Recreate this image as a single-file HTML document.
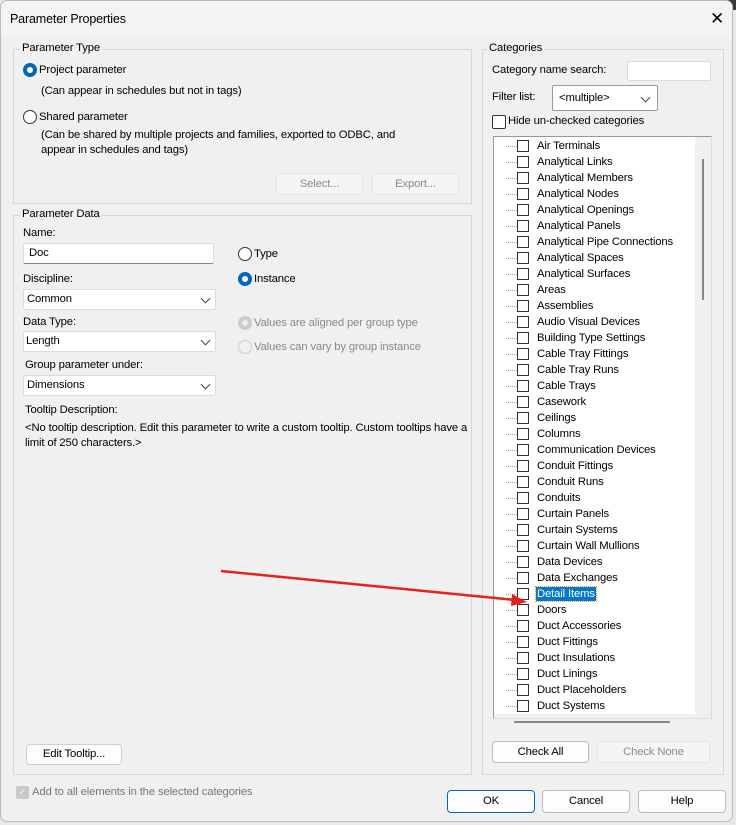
<!DOCTYPE html>
<html><head><meta charset="utf-8"><style>
*{box-sizing:border-box;margin:0;padding:0}
body{width:736px;height:825px;position:relative;overflow:hidden;background:#e8e8e8;font-family:"Liberation Sans",sans-serif;font-size:11.3px;letter-spacing:-0.15px;color:#000}
.a{position:absolute;white-space:nowrap}
.dlg{position:absolute;left:0;top:0;width:733px;height:822px;background:#f0f0f0;border:1px solid #bbb;border-radius:7px;overflow:hidden}
.grp{position:absolute;border:1px solid #d6d6d6}
.lg{position:absolute;background:#f0f0f0;padding:0 2px;top:-8px;left:6px}
.inp{position:absolute;background:#fff;border:1px solid #dcdcdc;border-bottom:1px solid #888;border-radius:2px}
.btn{position:absolute;background:#fdfdfd;border:1px solid #d0d0d0;border-radius:4px;text-align:center}
.dis{background:#f5f5f5;border-color:#e5e5e5;color:#8a8a8a}
.rad{position:absolute;width:14px;height:14px;border-radius:50%;border:1px solid #333;background:#fff}
.rad.on{background:#0067c0;border-color:#0067c0}
.rad.on::after{content:"";position:absolute;left:3px;top:3px;width:6px;height:6px;border-radius:50%;background:#fff}
.chev{position:absolute;right:6px;top:5px;width:7px;height:7px;border-right:1px solid #444;border-bottom:1px solid #444;transform:rotate(45deg)}
.it{position:absolute;left:0;height:16px}
.it .d{position:absolute;left:12px;top:8px;width:11px;border-top:1px dotted #999}
.it .c{position:absolute;left:23px;top:2px;width:12px;height:12px;border:1px solid #333;background:#fff}
.it .t{position:absolute;left:43px;top:1px;line-height:14px}
</style></head><body>
<div class="a" style="left:285px;top:0;width:600px;height:5px;background:#444"></div>
<div class="a" style="left:620px;top:0;width:120px;height:10px;background:#333a45"></div>
<div class="dlg">
<div class="a" style="left:0;top:0;width:733px;height:36px;background:#f3f3f3"></div>
<div class="a" style="left:9px;top:11px;font-size:12.5px">Parameter Properties</div>
<div class="a" style="left:709px;top:8px;font-size:17px;font-weight:300">✕</div>

<div class="grp" style="left:12px;top:48px;width:459px;height:155px"><span class="lg">Parameter Type</span></div>
<div class="rad on" style="left:22px;top:62px"></div>
<div class="a" style="left:38px;top:63px">Project parameter</div>
<div class="a" style="left:40px;top:84px">(Can appear in schedules but not in tags)</div>
<div class="rad" style="left:22px;top:109px"></div>
<div class="a" style="left:38px;top:110px">Shared parameter</div>
<div class="a" style="left:40px;top:127px;line-height:15px">(Can be shared by multiple projects and families, exported to ODBC, and<br>appear in schedules and tags)</div>
<div class="btn dis" style="left:275px;top:172px;width:87px;height:22px;line-height:20px">Select...</div>
<div class="btn dis" style="left:371px;top:172px;width:87px;height:22px;line-height:20px">Export...</div>

<div class="grp" style="left:12px;top:214px;width:459px;height:560px"><span class="lg">Parameter Data</span></div>
<div class="a" style="left:22px;top:226px">Name:</div>
<div class="inp" style="left:22px;top:242px;width:191px;height:21px"><span class="a" style="left:5px;top:3px">Doc</span></div>
<div class="a" style="left:22px;top:272px">Discipline:</div>
<div class="inp" style="left:22px;top:288px;width:193px;height:21px;border-bottom-color:#dcdcdc"><span class="a" style="left:3px;top:3px">Common</span><i class="chev"></i></div>
<div class="a" style="left:22px;top:315px">Data Type:</div>
<div class="inp" style="left:22px;top:330px;width:193px;height:21px;border-bottom-color:#dcdcdc"><span class="a" style="left:2px;top:3px">Length</span><i class="chev"></i></div>
<div class="a" style="left:24px;top:358px">Group parameter under:</div>
<div class="inp" style="left:22px;top:374px;width:193px;height:21px;border-bottom-color:#dcdcdc"><span class="a" style="left:3px;top:3px">Dimensions</span><i class="chev"></i></div>
<div class="a" style="left:24px;top:403px">Tooltip Description:</div>
<div class="a" style="left:24px;top:420px;line-height:15px">&lt;No tooltip description. Edit this parameter to write a custom tooltip. Custom tooltips have a<br>limit of 250 characters.&gt;</div>
<div class="rad" style="left:237px;top:246px"></div>
<div class="a" style="left:253px;top:247px">Type</div>
<div class="rad on" style="left:237px;top:271px"></div>
<div class="a" style="left:253px;top:272px">Instance</div>
<div class="rad" style="left:237px;top:315px;border-color:#ccc;background:#ccc"><span class="a" style="left:3px;top:3px;width:6px;height:6px;border-radius:50%;background:#eee"></span></div>
<div class="a" style="left:253px;top:316px;color:#8a8a8a">Values are aligned per group type</div>
<div class="rad" style="left:237px;top:339px;border-color:#ccc;background:#f0f0f0"></div>
<div class="a" style="left:253px;top:340px;color:#8a8a8a">Values can vary by group instance</div>
<div class="btn" style="left:25px;top:743px;width:96px;height:21px;line-height:19px">Edit Tooltip...</div>

<div class="a" style="left:15px;top:785px;width:13px;height:13px;background:#c8c8c8;border-radius:2px;color:#eee;font-size:10px;text-align:center;line-height:13px">✓</div>
<div class="a" style="left:31px;top:785px;color:#777">Add to all elements in the selected categories</div>

<div class="grp" style="left:481px;top:48px;width:242px;height:726px"><span class="lg" style="left:4px">Categories</span></div>
<div class="a" style="left:491px;top:63px">Category name search:</div>
<div class="inp" style="left:626px;top:60px;width:84px;height:20px;border-bottom-color:#dcdcdc"></div>
<div class="a" style="left:491px;top:90px">Filter list:</div>
<div class="inp" style="left:551px;top:84px;width:106px;height:26px;border-color:#999"><span class="a" style="left:6px;top:6px">&lt;multiple&gt;</span><i class="chev" style="top:8px;right:8px"></i></div>
<div class="a" style="left:491px;top:114px;width:14px;height:14px;border:1px solid #333;background:#fff;border-radius:2px"></div>
<div class="a" style="left:507px;top:114px">Hide un-checked categories</div>

<div class="a" style="left:492px;top:135px;width:219px;height:583px;border:1px solid #999;border-right-color:#ddd;border-bottom-color:#ddd;background:#f0f0f0">
<div class="a" style="left:0;top:0;width:201px;height:577px;background:#fff;overflow:hidden">
<div class="it" style="top:1px"><i class="d"></i><i class="c"></i><span class="t">Air Terminals</span></div>
<div class="it" style="top:17px"><i class="d"></i><i class="c"></i><span class="t">Analytical Links</span></div>
<div class="it" style="top:33px"><i class="d"></i><i class="c"></i><span class="t">Analytical Members</span></div>
<div class="it" style="top:49px"><i class="d"></i><i class="c"></i><span class="t">Analytical Nodes</span></div>
<div class="it" style="top:65px"><i class="d"></i><i class="c"></i><span class="t">Analytical Openings</span></div>
<div class="it" style="top:81px"><i class="d"></i><i class="c"></i><span class="t">Analytical Panels</span></div>
<div class="it" style="top:97px"><i class="d"></i><i class="c"></i><span class="t">Analytical Pipe Connections</span></div>
<div class="it" style="top:113px"><i class="d"></i><i class="c"></i><span class="t">Analytical Spaces</span></div>
<div class="it" style="top:129px"><i class="d"></i><i class="c"></i><span class="t">Analytical Surfaces</span></div>
<div class="it" style="top:145px"><i class="d"></i><i class="c"></i><span class="t">Areas</span></div>
<div class="it" style="top:161px"><i class="d"></i><i class="c"></i><span class="t">Assemblies</span></div>
<div class="it" style="top:177px"><i class="d"></i><i class="c"></i><span class="t">Audio Visual Devices</span></div>
<div class="it" style="top:193px"><i class="d"></i><i class="c"></i><span class="t">Building Type Settings</span></div>
<div class="it" style="top:209px"><i class="d"></i><i class="c"></i><span class="t">Cable Tray Fittings</span></div>
<div class="it" style="top:225px"><i class="d"></i><i class="c"></i><span class="t">Cable Tray Runs</span></div>
<div class="it" style="top:241px"><i class="d"></i><i class="c"></i><span class="t">Cable Trays</span></div>
<div class="it" style="top:257px"><i class="d"></i><i class="c"></i><span class="t">Casework</span></div>
<div class="it" style="top:273px"><i class="d"></i><i class="c"></i><span class="t">Ceilings</span></div>
<div class="it" style="top:289px"><i class="d"></i><i class="c"></i><span class="t">Columns</span></div>
<div class="it" style="top:305px"><i class="d"></i><i class="c"></i><span class="t">Communication Devices</span></div>
<div class="it" style="top:321px"><i class="d"></i><i class="c"></i><span class="t">Conduit Fittings</span></div>
<div class="it" style="top:337px"><i class="d"></i><i class="c"></i><span class="t">Conduit Runs</span></div>
<div class="it" style="top:353px"><i class="d"></i><i class="c"></i><span class="t">Conduits</span></div>
<div class="it" style="top:369px"><i class="d"></i><i class="c"></i><span class="t">Curtain Panels</span></div>
<div class="it" style="top:385px"><i class="d"></i><i class="c"></i><span class="t">Curtain Systems</span></div>
<div class="it" style="top:401px"><i class="d"></i><i class="c"></i><span class="t">Curtain Wall Mullions</span></div>
<div class="it" style="top:417px"><i class="d"></i><i class="c"></i><span class="t">Data Devices</span></div>
<div class="it" style="top:433px"><i class="d"></i><i class="c"></i><span class="t">Data Exchanges</span></div>
<div class="it" style="top:449px"><i class="d"></i><i class="c"></i><span class="t" style="background:#0078d7;color:#fff;outline:1px dotted #f90;padding:0 1px;left:42px">Detail Items</span></div>
<div class="it" style="top:465px"><i class="d"></i><i class="c"></i><span class="t">Doors</span></div>
<div class="it" style="top:481px"><i class="d"></i><i class="c"></i><span class="t">Duct Accessories</span></div>
<div class="it" style="top:497px"><i class="d"></i><i class="c"></i><span class="t">Duct Fittings</span></div>
<div class="it" style="top:513px"><i class="d"></i><i class="c"></i><span class="t">Duct Insulations</span></div>
<div class="it" style="top:529px"><i class="d"></i><i class="c"></i><span class="t">Duct Linings</span></div>
<div class="it" style="top:545px"><i class="d"></i><i class="c"></i><span class="t">Duct Placeholders</span></div>
<div class="it" style="top:561px"><i class="d"></i><i class="c"></i><span class="t">Duct Systems</span></div>
</div>
<div class="a" style="left:208px;top:22px;width:2px;height:141px;background:#888"></div>
<div class="a" style="left:20px;top:584px;width:156px;height:2px;background:#888"></div>
</div>
<div class="btn" style="left:491px;top:740px;width:97px;height:22px;line-height:20px;border-color:#bbb">Check All</div>
<div class="btn dis" style="left:596px;top:740px;width:113px;height:22px;line-height:20px">Check None</div>

<div class="btn" style="left:446px;top:789px;width:88px;height:23px;line-height:21px;border-color:#0067c0">OK</div>
<div class="btn" style="left:541px;top:789px;width:88px;height:23px;line-height:21px;border-color:#bbb">Cancel</div>
<div class="btn" style="left:637px;top:789px;width:88px;height:23px;line-height:21px;border-color:#bbb">Help</div>
</div>
<svg class="a" style="left:0;top:0" width="736" height="825"><line x1="221" y1="571" x2="515" y2="600" stroke="#e8201c" stroke-width="2.5"/><polygon points="527,602 512,594 511,606" fill="#e8201c"/></svg>
</body></html>
